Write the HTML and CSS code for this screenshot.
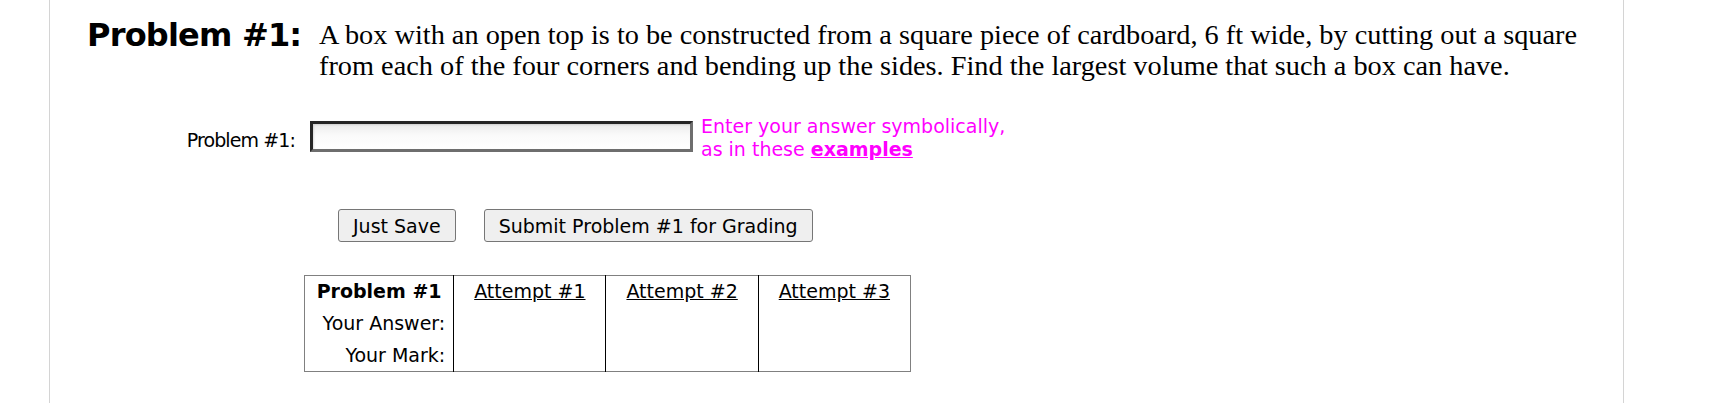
FILE: index.html
```html
<!DOCTYPE html>
<html lang="en">
<head>
<meta charset="utf-8">
<title>Problem #1</title>
<link rel="stylesheet" href="styles.css">
</head>
<body>
<div class="page">
  <div class="problem">
    <h1 class="problem-title">Problem #1:</h1>
    <p class="problem-text">A box with an open top is to be constructed from a square piece of cardboard, 6 ft wide, by cutting out a square from each of the four corners and bending up the sides. Find the largest volume that such a box can have.</p>
  </div>

  <div class="answer-row">
    <label class="answer-label" for="ans">Problem #1:</label>
    <input class="answer-input" id="ans" type="text">
    <div class="hint">Enter your answer symbolically,<br>as in these <a href="#" class="hint-link">examples</a></div>
  </div>

  <div class="buttons">
    <button class="btn" type="button">Just Save</button>
    <button class="btn" type="button">Submit Problem #1 for Grading</button>
  </div>

  <table class="attempts">
    <colgroup>
      <col class="c-label">
      <col class="c-att">
      <col class="c-att">
      <col class="c-att">
    </colgroup>
    <tr>
      <th class="head">Problem #1</th>
      <td class="att"><a href="#">Attempt #1</a></td>
      <td class="att"><a href="#">Attempt #2</a></td>
      <td class="att"><a href="#">Attempt #3</a></td>
    </tr>
    <tr>
      <td class="rowlabel">Your Answer:</td>
      <td></td><td></td><td></td>
    </tr>
    <tr>
      <td class="rowlabel">Your Mark:</td>
      <td></td><td></td><td></td>
    </tr>
  </table>
</div>
</body>
</html>
```

FILE: styles.css
```css
html, body {
  margin: 0;
  padding: 0;
  background: #ffffff;
}

body {
  font-family: "DejaVu Sans", Verdana, sans-serif;
  font-size: 19px;
  color: #000;
}

.page {
  margin-left: 49px;
  width: 1575px;
  height: 403px;
  box-sizing: border-box;
  border-left: 1px solid #d4d4d4;
  border-right: 1px solid #d4d4d4;
  overflow: hidden;
}

.problem {
  display: flex;
  align-items: flex-start;
  padding: 16px 0 0 37px;
}

.problem-title {
  flex: 0 0 232px;
  margin: 0;
  font-family: "DejaVu Sans", Verdana, sans-serif;
  font-weight: bold;
  font-size: 32px;
  letter-spacing: -0.8px;
  line-height: 38px;
}

.problem-text {
  width: 1290px;
  margin: 3px 0 0 0;
  font-family: "Liberation Serif", "Times New Roman", serif;
  font-size: 28.3px;
  line-height: 31px;
}

.answer-row {
  display: flex;
  align-items: flex-start;
  margin-top: 34px;
}

.answer-label {
  width: 245px;
  margin-top: 14px;
  text-align: right;
  line-height: 23px;
  letter-spacing: -0.9px;
}

.answer-input {
  box-sizing: border-box;
  width: 383px;
  height: 31px;
  margin: 6px 0 0 15px;
  padding: 0 4px;
  border-style: solid;
  border-width: 3px;
  border-color: #262626 #6e6e6e #6e6e6e #262626;
  background: linear-gradient(#ececec, #fafafa 45%, #ffffff);
  box-shadow: inset 1px 1px 2px rgba(0, 0, 0, 0.12);
  font: inherit;
  outline: none;
}

.hint {
  margin-left: 8px;
  color: #ff00ff;
  line-height: 23px;
}

.hint-link {
  color: #ff00ff;
  font-weight: bold;
  text-decoration: underline;
}

.buttons {
  display: flex;
  gap: 28px;
  margin-top: 48px;
  padding-left: 288px;
}

.btn {
  height: 33px;
  padding: 0 14px;
  font: inherit;
  color: #000;
  background: #efefef;
  border: 1px solid #767676;
  border-radius: 3px;
}

.attempts {
  margin: 33px 0 0 254px;
  border-collapse: collapse;
  table-layout: fixed;
  width: 607px;
  border: 1px solid #808080;
}

.c-label { width: 149px; }
.c-att { width: 152px; }

.attempts tr {
  height: 32px;
}

.attempts th,
.attempts td {
  padding: 0 8px;
  line-height: 23px;
  vertical-align: middle;
  font-size: 19px;
}

.attempts th + td,
.attempts td + td {
  border-left: 1px solid #000;
}

.attempts .head {
  font-weight: bold;
  text-align: center;
}

.attempts .att {
  text-align: center;
}

.attempts .att a {
  color: #000;
  text-decoration: underline;
}

.attempts .rowlabel {
  text-align: right;
}
```
